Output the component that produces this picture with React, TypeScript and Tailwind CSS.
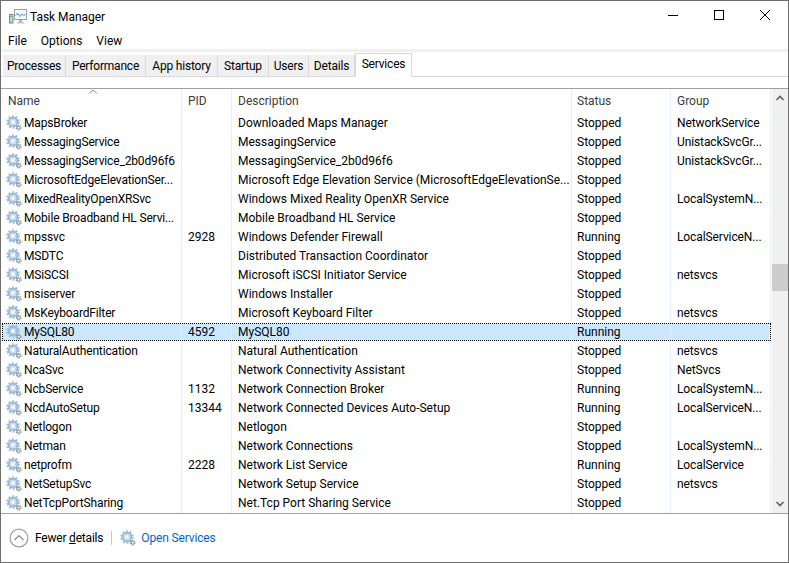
import React from 'react';

type Row = { name: string; pid?: string; desc: string; status: string; group?: string; selected?: boolean };

const rows: Row[] = [
  { name: 'MapsBroker', desc: 'Downloaded Maps Manager', status: 'Stopped', group: 'NetworkService' },
  { name: 'MessagingService', desc: 'MessagingService', status: 'Stopped', group: 'UnistackSvcGr...' },
  { name: 'MessagingService_2b0d96f6', desc: 'MessagingService_2b0d96f6', status: 'Stopped', group: 'UnistackSvcGr...' },
  { name: 'MicrosoftEdgeElevationSer...', desc: 'Microsoft Edge Elevation Service (MicrosoftEdgeElevationSe...', status: 'Stopped' },
  { name: 'MixedRealityOpenXRSvc', desc: 'Windows Mixed Reality OpenXR Service', status: 'Stopped', group: 'LocalSystemN...' },
  { name: 'Mobile Broadband HL Servi...', desc: 'Mobile Broadband HL Service', status: 'Stopped' },
  { name: 'mpssvc', pid: '2928', desc: 'Windows Defender Firewall', status: 'Running', group: 'LocalServiceN...' },
  { name: 'MSDTC', desc: 'Distributed Transaction Coordinator', status: 'Stopped' },
  { name: 'MSiSCSI', desc: 'Microsoft iSCSI Initiator Service', status: 'Stopped', group: 'netsvcs' },
  { name: 'msiserver', desc: 'Windows Installer', status: 'Stopped' },
  { name: 'MsKeyboardFilter', desc: 'Microsoft Keyboard Filter', status: 'Stopped', group: 'netsvcs' },
  { name: 'MySQL80', pid: '4592', desc: 'MySQL80', status: 'Running', selected: true },
  { name: 'NaturalAuthentication', desc: 'Natural Authentication', status: 'Stopped', group: 'netsvcs' },
  { name: 'NcaSvc', desc: 'Network Connectivity Assistant', status: 'Stopped', group: 'NetSvcs' },
  { name: 'NcbService', pid: '1132', desc: 'Network Connection Broker', status: 'Running', group: 'LocalSystemN...' },
  { name: 'NcdAutoSetup', pid: '13344', desc: 'Network Connected Devices Auto-Setup', status: 'Running', group: 'LocalServiceN...' },
  { name: 'Netlogon', desc: 'Netlogon', status: 'Stopped' },
  { name: 'Netman', desc: 'Network Connections', status: 'Stopped', group: 'LocalSystemN...' },
  { name: 'netprofm', pid: '2228', desc: 'Network List Service', status: 'Running', group: 'LocalService' },
  { name: 'NetSetupSvc', desc: 'Network Setup Service', status: 'Stopped', group: 'netsvcs' },
  { name: 'NetTcpPortSharing', desc: 'Net.Tcp Port Sharing Service', status: 'Stopped' },
];

const tabs = [
  { label: 'Processes', width: 'w-[63px]' },
  { label: 'Performance', width: 'w-[80px]' },
  { label: 'App history', width: 'w-[72px]' },
  { label: 'Startup', width: 'w-[51px]' },
  { label: 'Users', width: 'w-[40px]' },
  { label: 'Details', width: 'w-[46px]' },
];

const GearIcon = ({ className }: { className?: string }) => (
  <svg className={className} viewBox="0 0 16 16" width="16" height="16">
    <circle cx="7" cy="7" r="5.6" fill="none" stroke="#a3bfda" strokeWidth="2.4" strokeDasharray="1.9 1.62" />
    <circle cx="7" cy="7" r="4.3" fill="none" stroke="#97b8d8" strokeWidth="1.9" />
    <circle cx="7" cy="7" r="2.5" fill="#fafcfd" stroke="#87a3be" strokeWidth="0.6" />
    <circle cx="12.7" cy="12.7" r="2.3" fill="none" stroke="#8d9aa5" strokeWidth="1.3" strokeDasharray="1 0.8" />
    <circle cx="12.7" cy="12.7" r="1.5" fill="#f1f4f6" stroke="#76848f" strokeWidth="0.8" />
  </svg>
);

const AppIcon = () => (
  <svg viewBox="0 0 18 15" width="18" height="15">
    <rect x="0.5" y="5.5" width="3.5" height="8.5" fill="#c9d0d4" stroke="#7d878d" />
    <rect x="1" y="7" width="2" height="1" fill="#6cc04a" />
    <rect x="5.5" y="0.5" width="12" height="10" fill="#f8fcff" stroke="#8fa6b5" />
    <path d="M6.5 6.5 L8.5 4 L11 7.5 L13 5 L14.5 6.5 L16.5 5.5" fill="none" stroke="#2f9bd8" strokeWidth="1" />
    <rect x="10" y="11" width="3" height="2" fill="#a9b3b9" />
    <rect x="8" y="13" width="7" height="1.5" fill="#c3cace" />
  </svg>
);

const cols = 'grid grid-cols-[181px_50px_340px_99px_100px]';
const selectedCols = 'grid grid-cols-[180px_50px_340px_99px_99px]';
const cell = 'border-r border-[#e5effa] pl-[6px] whitespace-nowrap overflow-hidden';

const App: React.FC = () => {
  return (
    <div
      className="w-[789px] h-[563px] flex flex-col bg-white border border-[#6e6e6e] text-[12px] text-[#000] overflow-hidden"
      style={{ fontFamily: 'Roboto, "Noto Sans", sans-serif' }}
    >
      {/* title bar */}
      <div className="h-[30px] flex items-center shrink-0 pl-[8px]">
        <AppIcon />
        <span className="ml-[3px] mt-[1px] tracking-[-0.05px]">Task Manager</span>
        <div className="ml-auto flex items-center">
          <svg width="46" height="30" viewBox="0 0 46 30">
            <path d="M18 14.5h10" stroke="#000" strokeWidth="1" />
          </svg>
          <svg width="46" height="30" viewBox="0 0 46 30">
            <rect x="18.5" y="9.5" width="9" height="9" fill="none" stroke="#000" />
          </svg>
          <svg width="46" height="30" viewBox="0 0 46 30">
            <path d="M18 9l10 10M28 9L18 19" stroke="#000" strokeWidth="1" />
          </svg>
        </div>
      </div>

      {/* menu */}
      <div className="h-[18px] flex items-center gap-[14px] pl-[7px] pt-[2px] shrink-0">
        <span>File</span>
        <span>Options</span>
        <span>View</span>
      </div>

      {/* tabs */}
      <div className="h-[28px] flex items-end shrink-0 border-t-[3px] border-[#f0f0f0] pl-[2px] border-b border-b-[#d9d9d9] tracking-[-0.2px]">
        {tabs.map((t) => (
          <div
            key={t.label}
            className={`${t.width} h-[21px] flex items-center justify-center bg-[#f0f0f0] border-r border-[#d9d9d9]`}
          >
            {t.label}
          </div>
        ))}
        <div className="w-[57px] h-[24px] -mb-[1px] pb-[4px] flex items-center justify-center bg-white border border-b-0 border-[#d9d9d9]">
          Services
        </div>
      </div>
      <div className="h-[11px] shrink-0" />

      {/* table */}
      <div className="flex-1 min-h-0 flex border-t border-b border-[#a0a0a0] overflow-hidden">
        <div className="w-[771px] flex flex-col shrink-0">
          <div className={`${cols} h-[25px] shrink-0 relative text-[#3c3c3c]`}>
            <div className={`${cell} flex items-center !pl-[7px] pb-[2px]`}>Name</div>
            <div className={`${cell} flex items-center pb-[2px]`}>PID</div>
            <div className={`${cell} flex items-center pb-[2px]`}>Description</div>
            <div className={`${cell} flex items-center !pl-[5px] pb-[2px]`}>Status</div>
            <div className={`${cell} flex items-center pb-[2px]`}>Group</div>
            <svg className="absolute left-[87px] top-0" width="10" height="5" viewBox="0 0 10 5">
              <path d="M1 4.5L5 1l4 3.5" fill="none" stroke="#8a8a8a" />
            </svg>
          </div>
          {rows.map((r) => (
            <div
              key={r.name}
              className={
                r.selected
                  ? `${selectedCols} h-[18px] mb-[1px] mx-[1px] bg-[#cce8ff] outline-1 outline-dotted outline-black -outline-offset-1 leading-[19px]`
                  : `${cols} h-[19px] leading-[18px]`
              }
            >
              <div className={`${cell} flex items-center ${r.selected ? '!pl-[4px]' : '!pl-[5px] pb-[1px]'}`}>
                <GearIcon className="shrink-0" />
                <span className={`ml-[2px] tracking-[-0.15px] ${r.selected ? '' : '-mt-[1px]'}`}>{r.name}</span>
              </div>
              <div className={cell}>{r.pid}</div>
              <div className={cell}>{r.desc}</div>
              <div className={`${cell} !pl-[5px]`}>{r.status}</div>
              <div className={`${cell} tracking-[-0.1px]`}>{r.group}</div>
            </div>
          ))}
        </div>

        {/* scrollbar */}
        <div className="w-[16px] ml-auto bg-[#f0f0f0] flex flex-col items-center">
          <svg className="mt-[6px] shrink-0" width="10" height="6" viewBox="0 0 10 6">
            <path d="M1.5 5L5 1.5 8.5 5" fill="none" stroke="#606060" strokeWidth="1.6" />
          </svg>
          <div className="w-full h-[27px] mt-[163px] bg-[#cdcdcd] shrink-0" />
          <svg className="mt-auto mb-[6px] shrink-0" width="10" height="6" viewBox="0 0 10 6">
            <path d="M1.5 1L5 4.5 8.5 1" fill="none" stroke="#606060" strokeWidth="1.6" />
          </svg>
        </div>
      </div>

      {/* footer */}
      <div className="h-[48px] shrink-0 flex items-center pl-[8px]">
        <svg width="20" height="20" viewBox="0 0 20 20">
          <circle cx="10" cy="10" r="8.9" fill="none" stroke="#a0a0a0" strokeWidth="1.2" />
          <path d="M5.5 12L10 7.5l4.5 4.5" fill="none" stroke="#8a8a8a" strokeWidth="1.2" />
        </svg>
        <span className="ml-[6px] tracking-[-0.2px]">
          Fewer <span className="underline">d</span>etails
        </span>
        <div className="w-px h-[14px] bg-[#c8c8c8] ml-[8px]" />
        <GearIcon className="ml-[8px]" />
        <span className="ml-[5px] text-[#0066cc] tracking-[-0.15px]">Open Services</span>
      </div>
    </div>
  );
};

export default App;
